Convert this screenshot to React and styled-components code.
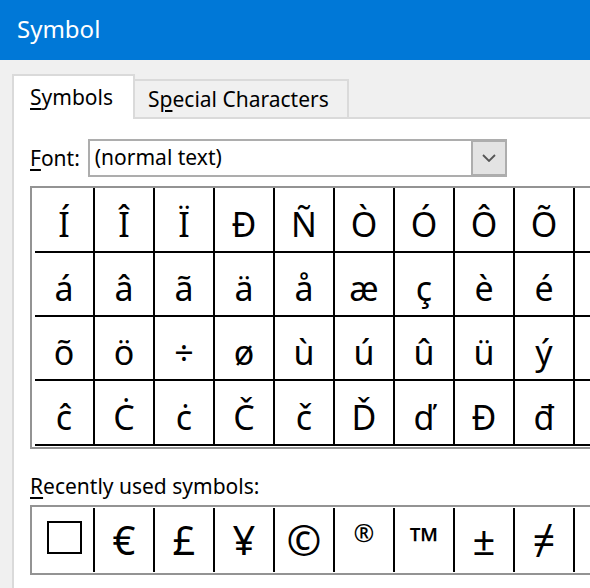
import React from 'react';
import styled, { createGlobalStyle, css } from 'styled-components';

const Global = createGlobalStyle`
  html, body { margin: 0; padding: 0; background: #f0f0f0; overflow: hidden; }
  body { font-family: "Noto Sans", "Open Sans", sans-serif; color: #000; }
`;

const Window = styled.div`
  width: 590px;
  height: 588px;
  display: flex;
  flex-direction: column;
  overflow: hidden;
  background: #f0f0f0;
`;

const TitleBar = styled.div`
  flex: none;
  height: 60px;
  box-sizing: border-box;
  background: #0078d7;
  color: #fff;
  font-size: 24px;
  display: flex;
  align-items: center;
  padding: 0 0 3px 17px;
`;

const Body = styled.div`
  flex: 1;
  min-height: 0;
  display: flex;
  flex-direction: column;
  padding: 14px 0 0 12px;
`;

const TabRow = styled.div`
  flex: none;
  display: flex;
  align-items: flex-end;
`;

const Tab = styled.div`
  box-sizing: border-box;
  display: flex;
  align-items: center;
  font-size: 21px;
  white-space: nowrap;
  ${p => p.$active ? css`
    width: 123px;
    height: 45px;
    background: #fff;
    border: 2px solid #dadada;
    border-bottom: none;
    padding: 0 0 2px 16px;
  ` : css`
    width: 214px;
    height: 40px;
    background: #f0f0f0;
    border-top: 2px solid #dadada;
    border-right: 2px solid #dadada;
    border-bottom: 2px solid #dadada;
    padding: 0 0 0 13px;
  `}
`;

const TabFiller = styled.div`
  flex: 1;
  border-bottom: 2px solid #dadada;
`;

const Key = styled.span`
  text-decoration: underline;
  text-underline-offset: 3px;
  text-decoration-thickness: 2px;
`;

const Panel = styled.div`
  flex: 1;
  min-height: 0;
  background: #fff;
  border-left: 2px solid #dadada;
  padding: 20px 0 0 16px;
  display: flex;
  flex-direction: column;
  align-items: flex-start;
`;

const FontRow = styled.div`
  display: flex;
  align-items: center;
  gap: 8px;
  height: 38px;
`;

const Label = styled.div`
  font-size: 21px;
  line-height: 24px;
  white-space: nowrap;
`;

const Dropdown = styled.div`
  box-sizing: border-box;
  width: 419px;
  height: 38px;
  border: 2px solid #adadad;
  background: #fff;
  display: flex;
`;

const DropText = styled.div`
  flex: 1;
  display: flex;
  align-items: center;
  padding: 0 0 2px 5px;
  font-size: 21px;
`;

const DropButton = styled.div`
  box-sizing: border-box;
  width: 34px;
  background: #e3e3e3;
  border-left: 2px solid #adadad;
  border-top: 1px solid #adadad;
  border-bottom: 1px solid #adadad;
  display: flex;
  align-items: center;
  justify-content: center;
`;

const CharGrid = styled.div`
  margin-top: 9px;
  border: 2px solid #939393;
  padding: 0 0 1px 3px;
  display: grid;
  grid-template-columns: repeat(10, 60px);
  grid-template-rows: ${p => p.$rows};
  width: max-content;
`;

const Cell = styled.div`
  box-sizing: border-box;
  display: flex;
  align-items: center;
  justify-content: center;
  border-right: 2px solid #000;
  border-bottom: ${p => (p.$bottom ? '2px solid #000' : 'none')};
  font-size: ${p => p.$size || 34}px;
  line-height: 1;
  padding-top: ${p => p.$pad || 0}px;
  white-space: nowrap;
  overflow: hidden;
`;

const Glyph = styled.span`
  display: inline-block;
  transform: translateY(${p => p.$shift || 0}px);
`;

const MissingBox = styled.span`
  display: inline-block;
  box-sizing: border-box;
  width: 35px;
  height: 33px;
  border: 2px solid #000;
  transform: translateY(-3px);
`;

const RecentLabel = styled(Label)`
  margin-top: 25px;
`;

const RecentGrid = styled(CharGrid)`
  margin-top: 7px;
  padding: 1px 0 1px 3px;
`;

const rows = [
  ['Í', 'Î', 'Ï', 'Ð', 'Ñ', 'Ò', 'Ó', 'Ô', 'Õ', ''],
  ['á', 'â', 'ã', 'ä', 'å', 'æ', 'ç', 'è', 'é', ''],
  ['õ', 'ö', '÷', 'ø', 'ù', 'ú', 'û', 'ü', 'ý', ''],
  ['ĉ', 'Ċ', 'ċ', 'Č', 'č', 'Ď', 'ď', 'Đ', 'đ', ''],
];

const recent = [
  { box: true },
  { c: '€', size: 40 },
  { c: '£', size: 40 },
  { c: '¥', size: 40 },
  { c: '©', size: 42 },
  { c: '®', size: 25, shift: -8 },
  { c: '™', size: 38 },
  { c: '±', size: 40 },
  { c: '≠', size: 40 },
  { c: '', size: 40 },
];

function Chevron() {
  return (
    <svg width="14" height="8" viewBox="0 0 14 8">
      <polyline points="1,1 7,7 13,1" fill="none" stroke="#555" strokeWidth="1.8" />
    </svg>
  );
}

export default function App() {
  return (
    <>
      <Global />
      <Window>
        <TitleBar>Symbol</TitleBar>
        <Body>
          <TabRow>
            <Tab $active><Key>S</Key>ymbols</Tab>
            <Tab>S<Key>p</Key>ecial Characters</Tab>
            <TabFiller />
          </TabRow>
          <Panel>
            <FontRow>
              <Label><Key>F</Key>ont:</Label>
              <Dropdown>
                <DropText>(normal text)</DropText>
                <DropButton><Chevron /></DropButton>
              </Dropdown>
            </FontRow>
            <CharGrid $rows="65px 64px 64px 65px">
              {rows.map((r, ri) =>
                r.map((c, ci) => (
                  <Cell key={`${ri}-${ci}`} $bottom $pad={8}>{c}</Cell>
                ))
              )}
            </CharGrid>
            <RecentLabel><Key>R</Key>ecently used symbols:</RecentLabel>
            <RecentGrid $rows="64px">
              {recent.map((s, i) => (
                <Cell key={i} $size={s.size}>
                  {s.box ? <MissingBox /> : <Glyph $shift={s.shift}>{s.c}</Glyph>}
                </Cell>
              ))}
            </RecentGrid>
          </Panel>
        </Body>
      </Window>
    </>
  );
}
